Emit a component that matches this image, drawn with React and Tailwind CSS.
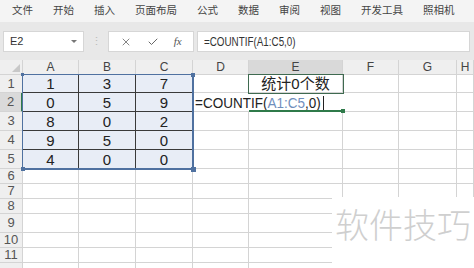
import { X, Check } from 'lucide-react';

const menus = ['文件', '开始', '插入', '页面布局', '公式', '数据', '审阅', '视图', '开发工具', '照相机'];
const letters = ['', 'A', 'B', 'C', 'D', 'E', 'F', 'G', 'H'];
const data = [
    [1, 3, 7],
    [0, 5, 9],
    [8, 0, 2],
    [9, 5, 0],
    [4, 0, 0],
];
const rowCount = 12;

const font = { fontFamily: '"Liberation Sans", "Noto Sans CJK SC", sans-serif' };

const Cell = ({ r, c }) => {
    // header row
    if (r === 0) {
        if (c === 0) {
            return (
                <div className="relative bg-[#efefef] border-r border-b border-[#d4d4d4]">
                    <div className="absolute right-[2px] bottom-[2px] w-0 h-0 border-l-[8px] border-l-transparent border-b-[8px] border-b-[#c8c8c8]" />
                </div>
            );
        }
        return (
            <div className={`flex items-center justify-center text-[12px] text-[#444] border-r border-b border-[#d4d4d4] ${c === 5 ? 'bg-[#d9d9d9]' : 'bg-[#efefef]'}`}>
                {letters[c]}
            </div>
        );
    }
    // row header (row 12 is only a sliver, no label shows)
    if (c === 0) {
        return (
            <div className={`flex items-center justify-center text-[13px] text-[#555] border-b border-[#d4d4d4] ${r === 2 ? 'bg-[#dadada] border-r-2 border-r-[#2f7a4a]' : 'bg-[#efefef] border-r'}`}>
                {r < rowCount ? r : ''}
            </div>
        );
    }
    // referenced range A1:C5
    if (r <= 5 && c <= 3) {
        return (
            <div className="flex items-center justify-center text-[15px] text-[#222] bg-[#e8edf6] border-r border-b border-[#3a3a3a] leading-none">
                {data[r - 1][c - 1]}
            </div>
        );
    }
    if (r === 1 && c === 5) {
        return (
            <div className="flex items-center justify-center text-[15px] text-[#222] border-r border-b border-[#d4d4d4] leading-none">
                统计0个数
            </div>
        );
    }
    if (r === 2 && c === 4) {
        return (
            <div className="flex items-center pl-[2px] border-b border-[#d4d4d4] whitespace-nowrap text-[15px] text-[#222] leading-none">
                <span className="inline-block origin-left scale-x-[0.9]">
                    =COUNTIF(<span className="text-[#6f8fbd]">A1:C5</span>,0)
                </span>
            </div>
        );
    }
    if (r === 2 && c === 5) {
        return <div className="border-b border-[#d4d4d4]" />;
    }
    return <div className="border-r border-b border-[#d4d4d4]" />;
};

const App = () => {
    const rows = Array.from({ length: rowCount + 1 }, (_, i) => i);
    const cols = Array.from({ length: 9 }, (_, i) => i);

    return (
        <div className="relative w-[474px] h-[268px] overflow-hidden bg-white" style={font}>
            {/* menu bar */}
            <div className="h-[22px] bg-[#f4f4f4] flex items-center pl-[12px] gap-[20px] text-[10.5px] text-[#444]">
                {menus.map((m) => (
                    <span key={m}>{m}</span>
                ))}
            </div>

            {/* name box + formula bar */}
            <div className="h-[38px] bg-[#e8e8e8] flex items-start pt-[9px] pl-[3px] pr-[4px]">
                <div className="w-[81px] h-[21px] bg-white border border-[#d6d6d6] flex items-center justify-between pl-[6px] pr-[6px] text-[11px] text-[#333]">
                    <span>E2</span>
                    <span className="w-0 h-0 border-l-[3px] border-r-[3px] border-t-[3px] border-l-transparent border-r-transparent border-t-[#777]" />
                </div>
                <div className="w-[24px] h-[21px] flex items-center justify-center text-[#bbb] text-[11px]">⋮</div>
                <div className="w-[86px] h-[21px] bg-white border border-[#d6d6d6] flex items-center justify-around px-[4px] text-[#666]">
                    <X size={12} strokeWidth={1.6} />
                    <Check size={12} strokeWidth={2} />
                    <span className="italic text-[11px] text-[#555]" style={{ fontFamily: '"Liberation Serif", serif' }}>fx</span>
                </div>
                <div className="ml-[3px] flex-1 h-[21px] bg-white border border-[#d6d6d6] flex items-center pl-[6px] text-[12px] text-[#333] whitespace-nowrap">
                    <span className="inline-block origin-left scale-x-[0.82]">=COUNTIF(A1:C5,0)</span>
                </div>
            </div>

            {/* sheet */}
            <div className="relative grid grid-cols-[23px_56px_57px_57px_56px_94px_56px_58px_1fr] grid-rows-[15px_18px_19px_19px_19px_19px_15px_15px_15px_19px_15px_15px_15px]">
                {rows.map((r) => cols.map((c) => <Cell key={`${r}-${c}`} r={r} c={c} />))}

                {/* A1:C5 range outline */}
                <div className="absolute left-[22px] top-[14px] w-[172px] h-[96px] border-l border-t border-r-2 border-b-2 border-[#4f71a0]" />
                <div className="absolute left-[21px] top-[13px] w-[3px] h-[3px] bg-[#4f71a0]" />
                <div className="absolute left-[191px] top-[13px] w-[4px] h-[4px] bg-[#4f71a0]" />
                <div className="absolute left-[21px] top-[107px] w-[4px] h-[4px] bg-[#4f71a0]" />
                <div className="absolute left-[191px] top-[107px] w-[5px] h-[5px] bg-[#4f71a0]" />

                {/* E1 box */}
                <div className="absolute left-[248px] top-[14px] w-[96px] h-[20px] border-[1.5px] border-[#3f6a50]" />

                {/* E2 active cell */}
                <div className="absolute left-[249px] top-[50px] w-[94px] h-[2px] bg-[#2f7a4a]" />
                <div className="absolute left-[341px] top-[49px] w-[4px] h-[4px] bg-[#2f7a4a]" />
                <div className="absolute left-[323px] top-[36px] w-px h-[14px] bg-[#222]" />
            </div>

            {/* watermark */}
            <div className="absolute left-[332px] top-[197px] right-0 bottom-0 bg-white flex items-start justify-center pt-[10px]">
                <span className="text-[34px] font-light text-[#cfcfcf] leading-none" style={{ fontFamily: '"Noto Sans CJK SC", sans-serif' }}>
                    软件技巧
                </span>
            </div>
        </div>
    );
};

export default App;
